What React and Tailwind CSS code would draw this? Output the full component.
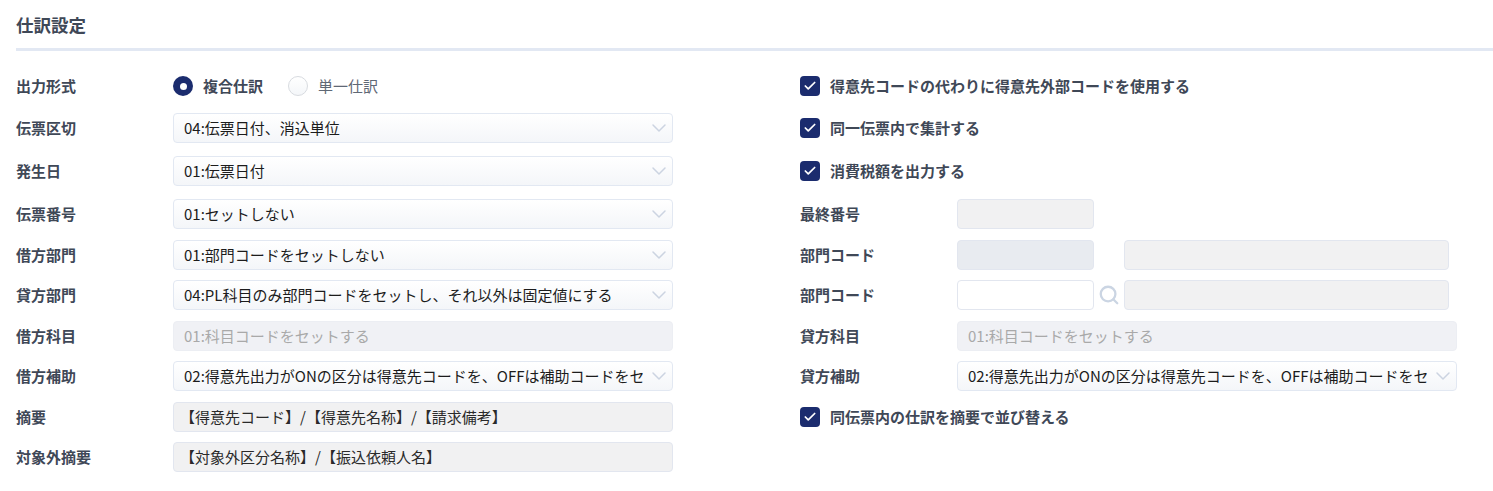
import React from 'react';
import { ChevronDown, Check, Search } from 'lucide-react';

const font = "font-['Noto_Sans_CJK_JP','Noto_Sans',sans-serif]";

const Label = ({ children }) => (
  <div className="w-[157px] shrink-0 text-[15px] font-semibold text-[#3f4857]">{children}</div>
);

const SelectBox = ({ children }) => (
  <div className="flex h-[30px] w-[500px] items-center rounded border border-[#e2e8f2] bg-gradient-to-b from-white to-[#f4f6f9] pl-[10px] pr-px text-[15px] text-[#1c1c1c]">
    <span className="flex-1 overflow-hidden whitespace-nowrap">{children}</span>
    <ChevronDown className="ml-1 h-6 w-6 shrink-0 text-[#ccd4e1]" strokeWidth={1.5} />
  </div>
);

const Disabled = ({ children }) => (
  <div className="flex h-[30px] w-[500px] items-center rounded border border-[#eceef3] bg-[#f0f1f5] px-[10px] text-[15px] text-[#a9a9a9]">
    {children}
  </div>
);

const Fixed = ({ children }) => (
  <div className="flex h-[30px] w-[500px] items-center rounded border border-[#e2e6ef] bg-[#f1f1f2] px-[6px] text-[15px] text-[#2a2a2a]">
    {children}
  </div>
);

const CheckRow = ({ children }) => (
  <div className="flex items-center">
    <span className="flex h-5 w-5 items-center justify-center rounded-[4px] bg-[#1b2c6e]">
      <Check className="h-[14px] w-[14px] text-white" strokeWidth={3} />
    </span>
    <span className="ml-[10px] text-[15px] font-semibold text-[#3f4857]">{children}</span>
  </div>
);

const Row = ({ className, left, right }) => (
  <div className={`flex h-[30px] items-center ${className}`}>
    <div className="flex w-[784px] shrink-0 items-center">{left}</div>
    <div className="flex flex-1 items-center">{right}</div>
  </div>
);

const longText = '02:得意先出力がONの区分は得意先コードを、OFFは補助コードをセットする';

export default function App() {
  return (
    <div className={`${font} h-[491px] w-[1493px] overflow-hidden bg-white pl-4`}>
      <div className="flex h-[51px] items-start border-b-[3px] border-[#e2e8f3] pt-[12px] text-[17.5px] leading-[26px] font-semibold text-[#3f4857]">
        仕訳設定
      </div>

      <div className="pt-5">
        <Row
          left={
            <>
              <Label>出力形式</Label>
              <span className="flex h-5 w-5 items-center justify-center rounded-full bg-[#1b2c6e]">
                <span className="h-[7px] w-[7px] rounded-full bg-white" />
              </span>
              <span className="ml-[10px] text-[15px] font-semibold text-[#3f4857]">複合仕訳</span>
              <span className="ml-[25px] h-5 w-5 rounded-full border border-[#d8dbe0] bg-gradient-to-b from-white to-[#f4f6f9]" />
              <span className="ml-[10px] text-[15px] text-[#5f6875]">単一仕訳</span>
            </>
          }
          right={<CheckRow>得意先コードの代わりに得意先外部コードを使用する</CheckRow>}
        />
        <Row
          className="mt-3"
          left={
            <>
              <Label>伝票区切</Label>
              <SelectBox>04:伝票日付、消込単位</SelectBox>
            </>
          }
          right={<CheckRow>同一伝票内で集計する</CheckRow>}
        />
        <Row
          className="mt-[13px]"
          left={
            <>
              <Label>発生日</Label>
              <SelectBox>01:伝票日付</SelectBox>
            </>
          }
          right={<CheckRow>消費税額を出力する</CheckRow>}
        />
        <Row
          className="mt-[13px]"
          left={
            <>
              <Label>伝票番号</Label>
              <SelectBox>01:セットしない</SelectBox>
            </>
          }
          right={
            <>
              <Label>最終番号</Label>
              <div className="h-[30px] w-[137px] rounded border border-[#e2e6ef] bg-[#f1f1f2]" />
            </>
          }
        />
        <Row
          className="mt-[11px]"
          left={
            <>
              <Label>借方部門</Label>
              <SelectBox>01:部門コードをセットしない</SelectBox>
            </>
          }
          right={
            <>
              <Label>部門コード</Label>
              <div className="h-[30px] w-[137px] rounded border border-[#e2e6ef] bg-[#e8ebf0]" />
              <div className="ml-[30px] h-[30px] w-[325px] rounded border border-[#e2e6ef] bg-[#f1f1f2]" />
            </>
          }
        />
        <Row
          className="mt-[10px]"
          left={
            <>
              <Label>貸方部門</Label>
              <SelectBox>04:PL科目のみ部門コードをセットし、それ以外は固定値にする</SelectBox>
            </>
          }
          right={
            <>
              <Label>部門コード</Label>
              <div className="h-[30px] w-[137px] rounded border border-[#e2e6ef] bg-white" />
              <div className="flex w-[30px] justify-center">
                <Search className="h-[22px] w-[22px] text-[#cbd5e3]" strokeWidth={2.5} />
              </div>
              <div className="h-[30px] w-[325px] rounded border border-[#e2e6ef] bg-[#f1f1f2]" />
            </>
          }
        />
        <Row
          className="mt-[11px]"
          left={
            <>
              <Label>借方科目</Label>
              <Disabled>01:科目コードをセットする</Disabled>
            </>
          }
          right={
            <>
              <Label>貸方科目</Label>
              <Disabled>01:科目コードをセットする</Disabled>
            </>
          }
        />
        <Row
          className="mt-[10px]"
          left={
            <>
              <Label>借方補助</Label>
              <SelectBox>{longText}</SelectBox>
            </>
          }
          right={
            <>
              <Label>貸方補助</Label>
              <SelectBox>{longText}</SelectBox>
            </>
          }
        />
        <Row
          className="mt-[11px]"
          left={
            <>
              <Label>摘要</Label>
              <Fixed>【得意先コード】/【得意先名称】/【請求備考】</Fixed>
            </>
          }
          right={<CheckRow>同伝票内の仕訳を摘要で並び替える</CheckRow>}
        />
        <Row
          className="mt-[10px]"
          left={
            <>
              <Label>対象外摘要</Label>
              <Fixed>【対象外区分名称】/【振込依頼人名】</Fixed>
            </>
          }
        />
      </div>
    </div>
  );
}
